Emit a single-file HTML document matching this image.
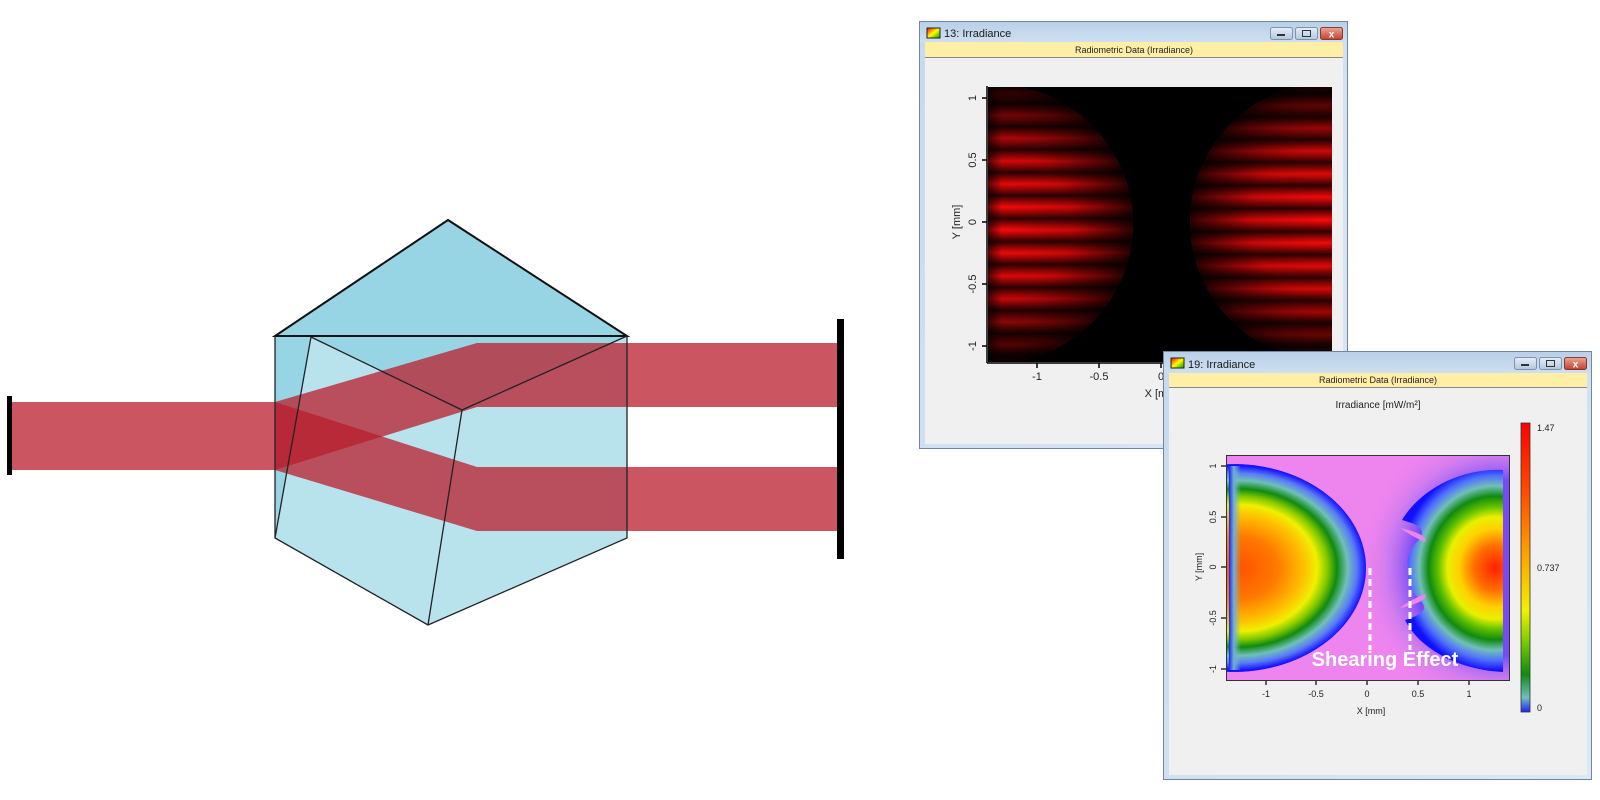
<!DOCTYPE html>
<html><head><meta charset="utf-8"><style>
html,body{margin:0;padding:0;background:#fff;width:1600px;height:800px;overflow:hidden}
svg{display:block}
text{font-family:"Liberation Sans",sans-serif}
</style></head><body>
<svg width="1600" height="800" viewBox="0 0 1600 800" xmlns="http://www.w3.org/2000/svg">
<defs>
 <linearGradient id="tb" x1="0" y1="0" x2="0" y2="1"><stop offset="0" stop-color="#b9d0e8"/><stop offset="1" stop-color="#cfdff0"/></linearGradient>
 <linearGradient id="fr" x1="0" y1="0" x2="1" y2="1"><stop offset="0" stop-color="#c6d9ee"/><stop offset="1" stop-color="#dbe8f5"/></linearGradient>
 <linearGradient id="btn" x1="0" y1="0" x2="0" y2="1"><stop offset="0" stop-color="#e6eef8"/><stop offset="1" stop-color="#b3c7de"/></linearGradient>
 <linearGradient id="cls" x1="0" y1="0" x2="0" y2="1"><stop offset="0" stop-color="#e9a79a"/><stop offset="1" stop-color="#c4412c"/></linearGradient>
 <linearGradient id="ico" x1="0" y1="0" x2="1" y2="1"><stop offset="0" stop-color="#ff0000"/><stop offset="0.5" stop-color="#ffff00"/><stop offset="1" stop-color="#00a000"/></linearGradient>
 <linearGradient id="sl" gradientUnits="userSpaceOnUse" x1="0" y1="195.5" x2="0" y2="218.5" spreadMethod="repeat"><stop offset="0" stop-color="#300000"/><stop offset="0.25" stop-color="#9a0505"/><stop offset="0.5" stop-color="#ff0a0a"/><stop offset="0.75" stop-color="#9a0505"/><stop offset="1" stop-color="#300000"/></linearGradient>
 <linearGradient id="sr" gradientUnits="userSpaceOnUse" x1="0" y1="208.5" x2="0" y2="231.5" spreadMethod="repeat"><stop offset="0" stop-color="#300000"/><stop offset="0.25" stop-color="#9a0505"/><stop offset="0.5" stop-color="#ff0a0a"/><stop offset="0.75" stop-color="#9a0505"/><stop offset="1" stop-color="#300000"/></linearGradient>
 <radialGradient id="envL" gradientUnits="userSpaceOnUse" cx="1000" cy="224" r="145"><stop offset="0" stop-color="#000" stop-opacity="0"/><stop offset="0.5" stop-color="#000" stop-opacity="0.2"/><stop offset="0.85" stop-color="#000" stop-opacity="0.7"/><stop offset="1" stop-color="#000" stop-opacity="1"/></radialGradient>
 <radialGradient id="envR" gradientUnits="userSpaceOnUse" cx="1323" cy="222" r="145"><stop offset="0" stop-color="#000" stop-opacity="0"/><stop offset="0.5" stop-color="#000" stop-opacity="0.2"/><stop offset="0.85" stop-color="#000" stop-opacity="0.7"/><stop offset="1" stop-color="#000" stop-opacity="1"/></radialGradient>
 <linearGradient id="edgeL" x1="0" y1="0" x2="1" y2="0"><stop offset="0" stop-color="#000" stop-opacity="0.6"/><stop offset="1" stop-color="#000" stop-opacity="0"/></linearGradient>
 <radialGradient id="blobL" gradientUnits="userSpaceOnUse" cx="1238" cy="568" r="132" gradientTransform="translate(1238 568) scale(1 0.8) translate(-1238 -568)">
  <stop offset="0" stop-color="#ff5000"/><stop offset="0.3" stop-color="#ff7a00"/><stop offset="0.5" stop-color="#ffc000"/><stop offset="0.6" stop-color="#f0f000"/><stop offset="0.68" stop-color="#80c800"/><stop offset="0.75" stop-color="#108a10"/><stop offset="0.83" stop-color="#70c0b8"/><stop offset="0.9" stop-color="#5a7af8"/><stop offset="0.97" stop-color="#1010ff"/><stop offset="1" stop-color="#3030ff"/></radialGradient>
 <radialGradient id="blobR" gradientUnits="userSpaceOnUse" cx="1495" cy="568" r="95" gradientTransform="translate(1495 568) scale(1 1.08) translate(-1495 -568)">
  <stop offset="0" stop-color="#ff2000"/><stop offset="0.22" stop-color="#ff7000"/><stop offset="0.38" stop-color="#ffd000"/><stop offset="0.5" stop-color="#e8f000"/><stop offset="0.6" stop-color="#60c000"/><stop offset="0.7" stop-color="#108a10"/><stop offset="0.8" stop-color="#70c0b8"/><stop offset="0.9" stop-color="#5070ff"/><stop offset="1" stop-color="#1010ff"/></radialGradient>
 <radialGradient id="halo" gradientUnits="userSpaceOnUse" cx="1500" cy="568" r="160"><stop offset="0.55" stop-color="#5a3cf8" stop-opacity="0.8"/><stop offset="0.72" stop-color="#a070f0" stop-opacity="0.35"/><stop offset="0.9" stop-color="#ee82ee" stop-opacity="0"/></radialGradient>
 <linearGradient id="blueL" x1="0" y1="0" x2="1" y2="0"><stop offset="0" stop-color="#2020ff"/><stop offset="0.4" stop-color="#70b0d0"/><stop offset="1" stop-color="#70c0b8" stop-opacity="0"/></linearGradient>
 <linearGradient id="cbar" x1="0" y1="1" x2="0" y2="0"><stop offset="0" stop-color="#2020ff"/><stop offset="0.05" stop-color="#70c0c0"/><stop offset="0.13" stop-color="#108a10"/><stop offset="0.25" stop-color="#80d000"/><stop offset="0.35" stop-color="#f0f000"/><stop offset="0.55" stop-color="#ffa000"/><stop offset="0.75" stop-color="#ff5000"/><stop offset="1" stop-color="#ff0000"/></linearGradient>
 <clipPath id="c1"><rect x="988" y="87" width="344" height="275"/></clipPath>
 <clipPath id="c2"><rect x="1226" y="455" width="283" height="225"/></clipPath>
</defs>

<!-- optical setup -->
<rect x="7" y="396" width="5" height="79" fill="#000"/>
<rect x="837" y="319" width="7" height="240" fill="#000"/>
<polygon points="275,336 627,336 627,538 428,625 275,538" fill="#b8e2ec"/>
<polygon points="448,220 275,336 627,336" fill="#98d5e4"/>
<polygon points="275,336 311,337 275,538" fill="#98d5e4"/>
<polygon points="311,337 627,336 462,410" fill="#98d5e4"/>
<g fill="rgb(185,30,45)" fill-opacity="0.75">
 <rect x="12" y="402" width="263" height="68"/>
 <polygon points="275,402 477,343 837,343 837,407 477,407 275,470"/>
 <polygon points="275,402 477,467 837,467 837,531 477,531 275,470"/>
</g>
<g fill="none" stroke="#111" stroke-width="2">
 <polygon points="448,220 275,336 627,336"/>
</g>
<g fill="none" stroke="#222" stroke-width="1.3">
 <polyline points="275,336 275,538 428,625 627,538 627,336"/>
 <polyline points="311,337 275,538"/>
 <polyline points="311,337 462,410 627,336"/>
 <polyline points="462,410 428,625"/>
</g>

<!-- window 1 -->
<rect x="919.5" y="21.5" width="428" height="427" fill="url(#fr)" stroke="#6f87a3"/>
<rect x="920" y="22" width="427" height="20" fill="url(#tb)"/>
<rect x="927" y="28" width="13" height="10" fill="url(#ico)" stroke="#222"/>
<text x="944" y="37" font-size="11" fill="#1a1a1a">13: Irradiance</text>
<rect x="1270.5" y="27.5" width="22" height="12" rx="2" fill="url(#btn)" stroke="#7d93ad"/>
<rect x="1277" y="34" width="8" height="2" fill="#333"/>
<rect x="1295.5" y="27.5" width="22" height="12" rx="2" fill="url(#btn)" stroke="#7d93ad"/>
<rect x="1302.5" y="30.5" width="8" height="6" fill="none" stroke="#333"/>
<rect x="1320.5" y="27.5" width="22" height="12" rx="2" fill="url(#cls)" stroke="#8a3a30"/>
<text x="1331.5" y="37.5" font-size="10" font-weight="bold" fill="#fff" text-anchor="middle">x</text>
<rect x="925" y="42" width="418" height="15" fill="#ffeea6"/>
<line x1="925" y1="57.5" x2="1343" y2="57.5" stroke="#888"/>
<text x="1134" y="53" font-size="9" fill="#222" text-anchor="middle">Radiometric Data (Irradiance)</text>
<rect x="925" y="58" width="418" height="386" fill="#f0f0f0"/>
<rect x="988" y="87" width="344" height="275" fill="#000"/>
<g clip-path="url(#c1)">
 <ellipse cx="990" cy="224" rx="143" ry="140" fill="url(#sl)"/>
 <ellipse cx="990" cy="224" rx="143" ry="140" fill="url(#envL)"/>
 <rect x="988" y="87" width="14" height="275" fill="url(#edgeL)"/>
 <ellipse cx="1333" cy="222" rx="143" ry="140" fill="url(#sr)"/>
 <ellipse cx="1333" cy="222" rx="143" ry="140" fill="url(#envR)"/>
</g>
<g stroke="#000" stroke-width="1.5">
 <line x1="987" y1="86" x2="987" y2="363"/><line x1="987" y1="363" x2="1332" y2="363"/>
 <line x1="982" y1="98" x2="987" y2="98"/><line x1="982" y1="160" x2="987" y2="160"/><line x1="982" y1="222" x2="987" y2="222"/><line x1="982" y1="284" x2="987" y2="284"/><line x1="982" y1="346" x2="987" y2="346"/>
 <line x1="1037" y1="363" x2="1037" y2="368"/><line x1="1099" y1="363" x2="1099" y2="368"/><line x1="1161" y1="363" x2="1161" y2="368"/>
</g>
<g font-size="11" fill="#222" text-anchor="middle">
 <text transform="translate(976,98) rotate(-90)">1</text>
 <text transform="translate(976,160) rotate(-90)">0.5</text>
 <text transform="translate(976,222) rotate(-90)">0</text>
 <text transform="translate(976,284) rotate(-90)">-0.5</text>
 <text transform="translate(976,346) rotate(-90)">-1</text>
 <text transform="translate(960,222) rotate(-90)">Y [mm]</text>
 <text x="1037" y="380">-1</text><text x="1099" y="380">-0.5</text><text x="1161" y="380">0</text>
 <text x="1162" y="397">X [mm]</text>
</g>

<!-- window 2 -->
<rect x="1163.5" y="351.5" width="428" height="428" fill="url(#fr)" stroke="#6f87a3"/>
<rect x="1164" y="352" width="427" height="21" fill="url(#tb)"/>
<rect x="1171" y="358" width="13" height="10" fill="url(#ico)" stroke="#222"/>
<text x="1188" y="368" font-size="11" fill="#1a1a1a">19: Irradiance</text>
<rect x="1514.5" y="357.5" width="22" height="12" rx="2" fill="url(#btn)" stroke="#7d93ad"/>
<rect x="1521" y="364" width="8" height="2" fill="#333"/>
<rect x="1539.5" y="357.5" width="22" height="12" rx="2" fill="url(#btn)" stroke="#7d93ad"/>
<rect x="1546.5" y="360.5" width="8" height="6" fill="none" stroke="#333"/>
<rect x="1564.5" y="357.5" width="22" height="12" rx="2" fill="url(#cls)" stroke="#8a3a30"/>
<text x="1575.5" y="367.5" font-size="10" font-weight="bold" fill="#fff" text-anchor="middle">x</text>
<rect x="1169" y="373" width="418" height="14" fill="#ffeea6"/>
<line x1="1169" y1="387.5" x2="1587" y2="387.5" stroke="#888"/>
<text x="1378" y="383" font-size="9" fill="#222" text-anchor="middle">Radiometric Data (Irradiance)</text>
<rect x="1169" y="388" width="418" height="387" fill="#f0f0f0"/>
<text x="1378" y="408" font-size="10" fill="#222" text-anchor="middle">Irradiance  [mW/m²]</text>
<rect x="1226" y="455" width="283" height="225" fill="#ee84ee"/>
<g clip-path="url(#c2)">
 <ellipse cx="1500" cy="568" rx="160" ry="150" fill="url(#halo)"/>
 <path d="M1236,464 L1236,672 A132,104 0 0 0 1236,464 Z" transform="translate(-3 0)" fill="url(#blobL)"/>
 <ellipse cx="1233" cy="568" rx="133" ry="104" fill="url(#blobL)"/>
 <rect x="1229" y="466" width="12" height="204" fill="url(#blueL)"/>
 <path d="M1503,470 C1460,468 1420,490 1402,520 C1420,525 1430,530 1414,545 C1408,555 1405,565 1410,570 C1405,580 1410,590 1420,600 C1430,610 1420,615 1405,620 C1420,650 1460,670 1503,672 Z" fill="url(#blobR)"/>
 <path d="M1400,528 C1420,532 1428,538 1425,542 C1420,540 1410,535 1400,528 Z M1400,608 C1420,604 1428,598 1425,594 C1420,596 1410,600 1400,608 Z" fill="#ee84ee"/>
</g>
<rect x="1226.5" y="455.5" width="283" height="225" fill="none" stroke="#333"/>
<g stroke="#fff" stroke-width="3" stroke-dasharray="7,4">
 <line x1="1370" y1="568" x2="1370" y2="650"/>
 <line x1="1410" y1="568" x2="1410" y2="650"/>
</g>
<text x="1385" y="666" font-size="20" font-weight="bold" fill="#fff" text-anchor="middle">Shearing Effect</text>
<g stroke="#000" stroke-width="1.2">
 <line x1="1221" y1="466" x2="1226" y2="466"/><line x1="1221" y1="517" x2="1226" y2="517"/><line x1="1221" y1="567" x2="1226" y2="567"/><line x1="1221" y1="618" x2="1226" y2="618"/><line x1="1221" y1="669" x2="1226" y2="669"/>
 <line x1="1266" y1="681" x2="1266" y2="685"/><line x1="1316" y1="681" x2="1316" y2="685"/><line x1="1367" y1="681" x2="1367" y2="685"/><line x1="1418" y1="681" x2="1418" y2="685"/><line x1="1469" y1="681" x2="1469" y2="685"/>
</g>
<g font-size="9" fill="#222" text-anchor="middle">
 <text transform="translate(1216,466) rotate(-90)">1</text>
 <text transform="translate(1216,517) rotate(-90)">0.5</text>
 <text transform="translate(1216,567) rotate(-90)">0</text>
 <text transform="translate(1216,618) rotate(-90)">-0.5</text>
 <text transform="translate(1216,669) rotate(-90)">-1</text>
 <text transform="translate(1202,567) rotate(-90)">Y [mm]</text>
 <text x="1266" y="697">-1</text><text x="1316" y="697">-0.5</text><text x="1367" y="697">0</text><text x="1418" y="697">0.5</text><text x="1469" y="697">1</text>
 <text x="1371" y="714">X [mm]</text>
</g>
<rect x="1521" y="423" width="9" height="289" fill="url(#cbar)" stroke="#333" stroke-width="0.8"/>
<g font-size="9" fill="#222">
 <text x="1537" y="431">1.47</text>
 <text x="1537" y="571">0.737</text>
 <text x="1537" y="711">0</text>
</g>
</svg>
</body></html>
